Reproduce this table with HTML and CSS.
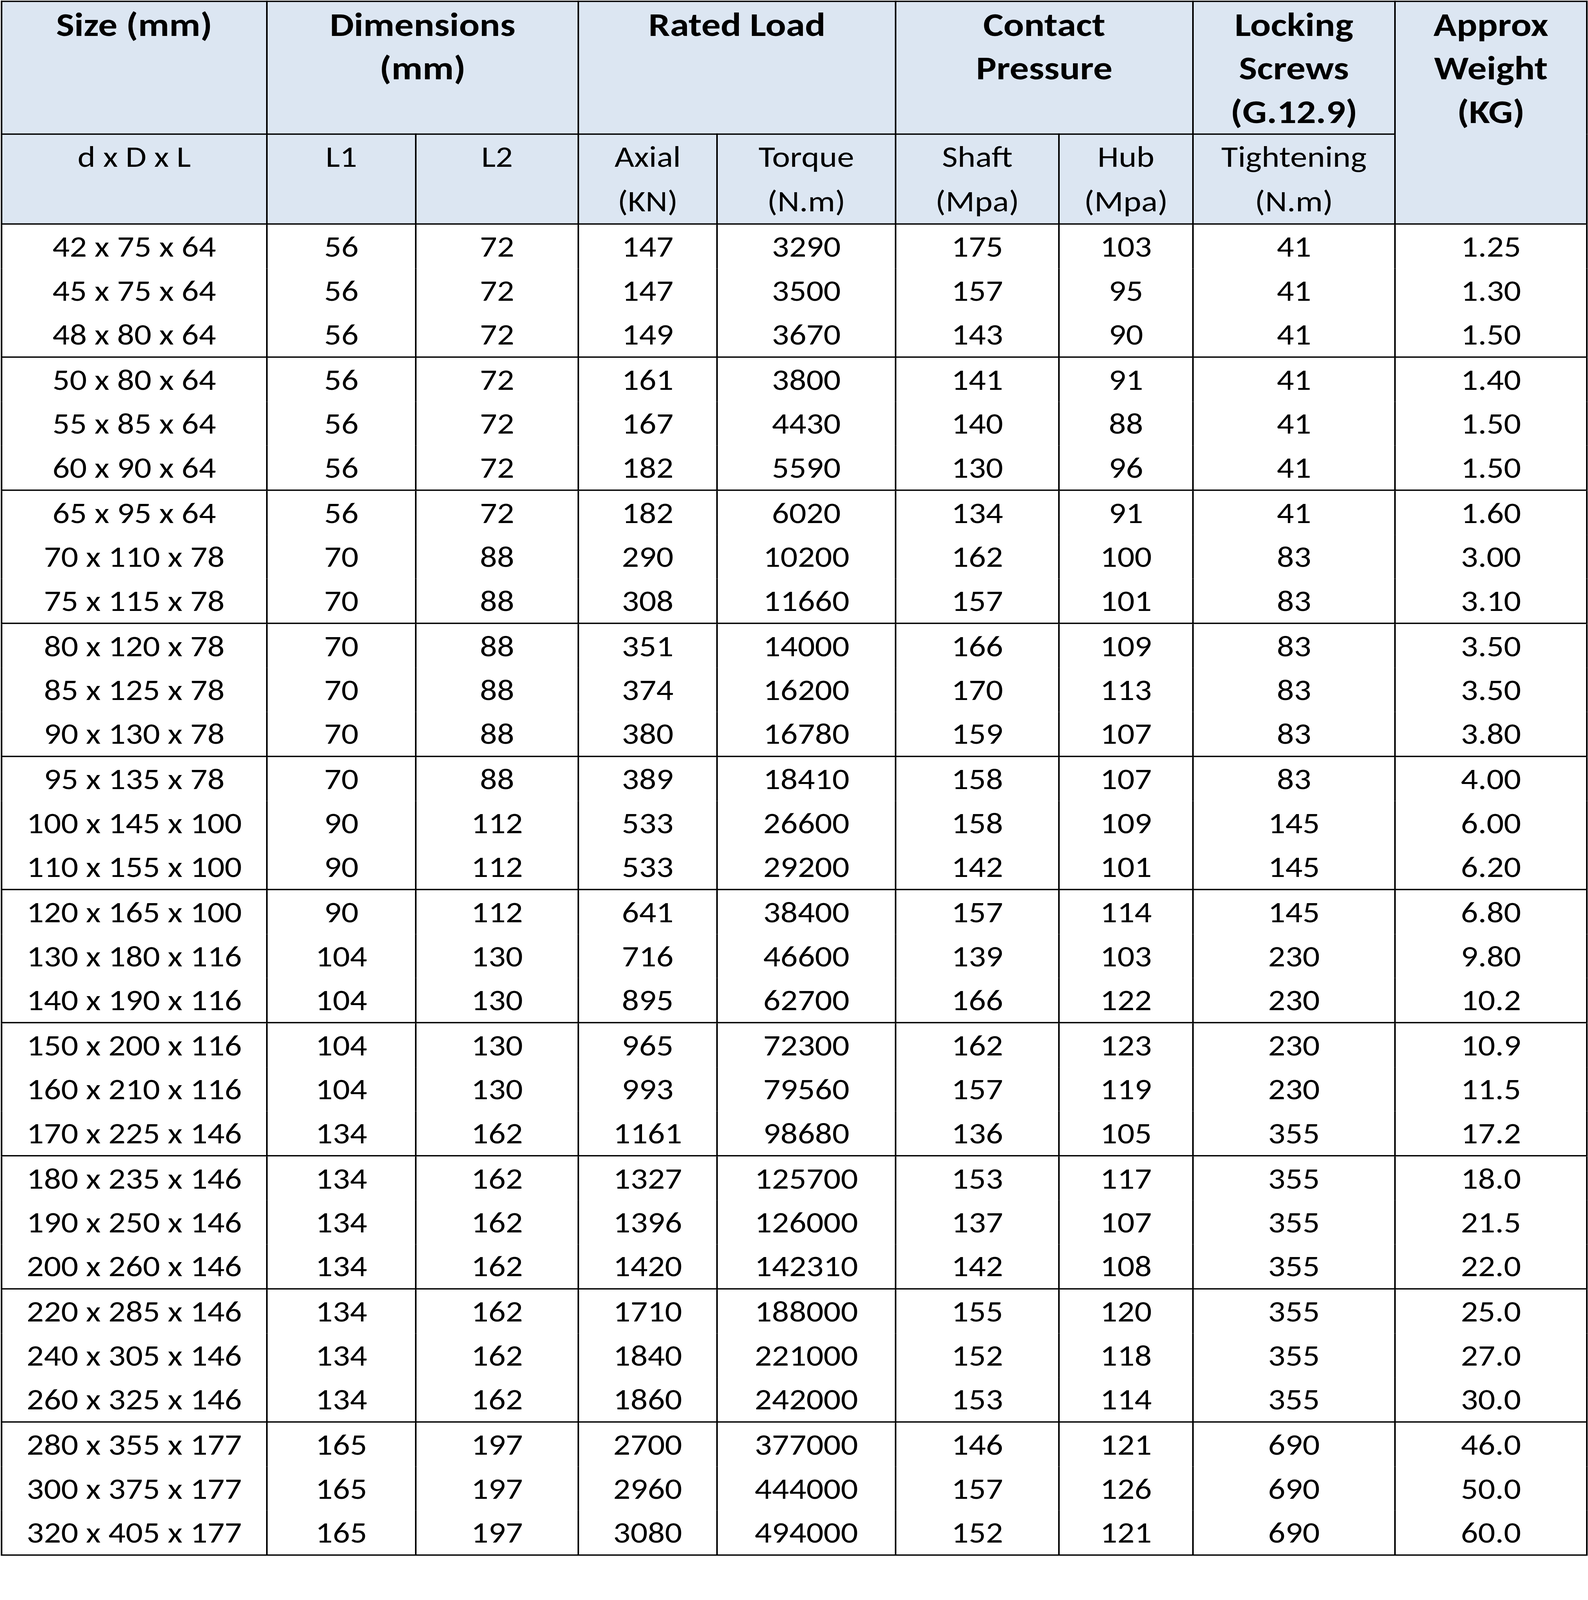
FILE: index.html
```html
<!DOCTYPE html>
<html lang="en">
<head>
<meta charset="utf-8">
<title>Locking Assembly Dimensions</title>
<link rel="stylesheet" href="styles.css">
</head>
<body>
<div class="sheet">
<table class="spec">
  <colgroup>
    <col class="c-size"><col class="c-l1"><col class="c-l2"><col class="c-axial"><col class="c-torque"><col class="c-shaft"><col class="c-hub"><col class="c-tight"><col class="c-weight">
  </colgroup>
  <thead>
    <tr class="head-main">
      <th>Size (mm)</th>
      <th colspan="2">Dimensions<br>(mm)</th>
      <th colspan="2">Rated Load</th>
      <th colspan="2">Contact<br>Pressure</th>
      <th>Locking<br>Screws<br>(G.12.9)</th>
      <th rowspan="2">Approx<br>Weight<br>(KG)</th>
    </tr>
    <tr class="head-sub">
      <th>d x D x L</th>
      <th>L1</th>
      <th>L2</th>
      <th>Axial<br>(KN)</th>
      <th>Torque<br>(N.m)</th>
      <th>Shaft<br>(Mpa)</th>
      <th>Hub<br>(Mpa)</th>
      <th>Tightening<br>(N.m)</th>
    </tr>
  </thead>
  <tbody>
    <tr><td>42 x 75 x 64</td><td>56</td><td>72</td><td>147</td><td>3290</td><td>175</td><td>103</td><td>41</td><td>1.25</td></tr>
    <tr><td>45 x 75 x 64</td><td>56</td><td>72</td><td>147</td><td>3500</td><td>157</td><td>95</td><td>41</td><td>1.30</td></tr>
    <tr><td>48 x 80 x 64</td><td>56</td><td>72</td><td>149</td><td>3670</td><td>143</td><td>90</td><td>41</td><td>1.50</td></tr>
  </tbody>
  <tbody>
    <tr><td>50 x 80 x 64</td><td>56</td><td>72</td><td>161</td><td>3800</td><td>141</td><td>91</td><td>41</td><td>1.40</td></tr>
    <tr><td>55 x 85 x 64</td><td>56</td><td>72</td><td>167</td><td>4430</td><td>140</td><td>88</td><td>41</td><td>1.50</td></tr>
    <tr><td>60 x 90 x 64</td><td>56</td><td>72</td><td>182</td><td>5590</td><td>130</td><td>96</td><td>41</td><td>1.50</td></tr>
  </tbody>
  <tbody>
    <tr><td>65 x 95 x 64</td><td>56</td><td>72</td><td>182</td><td>6020</td><td>134</td><td>91</td><td>41</td><td>1.60</td></tr>
    <tr><td>70 x 110 x 78</td><td>70</td><td>88</td><td>290</td><td>10200</td><td>162</td><td>100</td><td>83</td><td>3.00</td></tr>
    <tr><td>75 x 115 x 78</td><td>70</td><td>88</td><td>308</td><td>11660</td><td>157</td><td>101</td><td>83</td><td>3.10</td></tr>
  </tbody>
  <tbody>
    <tr><td>80 x 120 x 78</td><td>70</td><td>88</td><td>351</td><td>14000</td><td>166</td><td>109</td><td>83</td><td>3.50</td></tr>
    <tr><td>85 x 125 x 78</td><td>70</td><td>88</td><td>374</td><td>16200</td><td>170</td><td>113</td><td>83</td><td>3.50</td></tr>
    <tr><td>90 x 130 x 78</td><td>70</td><td>88</td><td>380</td><td>16780</td><td>159</td><td>107</td><td>83</td><td>3.80</td></tr>
  </tbody>
  <tbody>
    <tr><td>95 x 135 x 78</td><td>70</td><td>88</td><td>389</td><td>18410</td><td>158</td><td>107</td><td>83</td><td>4.00</td></tr>
    <tr><td>100 x 145 x 100</td><td>90</td><td>112</td><td>533</td><td>26600</td><td>158</td><td>109</td><td>145</td><td>6.00</td></tr>
    <tr><td>110 x 155 x 100</td><td>90</td><td>112</td><td>533</td><td>29200</td><td>142</td><td>101</td><td>145</td><td>6.20</td></tr>
  </tbody>
  <tbody>
    <tr><td>120 x 165 x 100</td><td>90</td><td>112</td><td>641</td><td>38400</td><td>157</td><td>114</td><td>145</td><td>6.80</td></tr>
    <tr><td>130 x 180 x 116</td><td>104</td><td>130</td><td>716</td><td>46600</td><td>139</td><td>103</td><td>230</td><td>9.80</td></tr>
    <tr><td>140 x 190 x 116</td><td>104</td><td>130</td><td>895</td><td>62700</td><td>166</td><td>122</td><td>230</td><td>10.2</td></tr>
  </tbody>
  <tbody>
    <tr><td>150 x 200 x 116</td><td>104</td><td>130</td><td>965</td><td>72300</td><td>162</td><td>123</td><td>230</td><td>10.9</td></tr>
    <tr><td>160 x 210 x 116</td><td>104</td><td>130</td><td>993</td><td>79560</td><td>157</td><td>119</td><td>230</td><td>11.5</td></tr>
    <tr><td>170 x 225 x 146</td><td>134</td><td>162</td><td>1161</td><td>98680</td><td>136</td><td>105</td><td>355</td><td>17.2</td></tr>
  </tbody>
  <tbody>
    <tr><td>180 x 235 x 146</td><td>134</td><td>162</td><td>1327</td><td>125700</td><td>153</td><td>117</td><td>355</td><td>18.0</td></tr>
    <tr><td>190 x 250 x 146</td><td>134</td><td>162</td><td>1396</td><td>126000</td><td>137</td><td>107</td><td>355</td><td>21.5</td></tr>
    <tr><td>200 x 260 x 146</td><td>134</td><td>162</td><td>1420</td><td>142310</td><td>142</td><td>108</td><td>355</td><td>22.0</td></tr>
  </tbody>
  <tbody>
    <tr><td>220 x 285 x 146</td><td>134</td><td>162</td><td>1710</td><td>188000</td><td>155</td><td>120</td><td>355</td><td>25.0</td></tr>
    <tr><td>240 x 305 x 146</td><td>134</td><td>162</td><td>1840</td><td>221000</td><td>152</td><td>118</td><td>355</td><td>27.0</td></tr>
    <tr><td>260 x 325 x 146</td><td>134</td><td>162</td><td>1860</td><td>242000</td><td>153</td><td>114</td><td>355</td><td>30.0</td></tr>
  </tbody>
  <tbody>
    <tr><td>280 x 355 x 177</td><td>165</td><td>197</td><td>2700</td><td>377000</td><td>146</td><td>121</td><td>690</td><td>46.0</td></tr>
    <tr><td>300 x 375 x 177</td><td>165</td><td>197</td><td>2960</td><td>444000</td><td>157</td><td>126</td><td>690</td><td>50.0</td></tr>
    <tr><td>320 x 405 x 177</td><td>165</td><td>197</td><td>3080</td><td>494000</td><td>152</td><td>121</td><td>690</td><td>60.0</td></tr>
  </tbody>
</table>
</div>
</body>
</html>
```

FILE: styles.css
```css
html, body {
  margin: 0;
  padding: 0;
  background: #ffffff;
}

body {
  font-family: Carlito, Lato, "Liberation Sans", sans-serif;
  color: #000000;
}

.sheet {
  padding: 2px 0 0 2px;
  transform-origin: 0 0;
}

.spec {
  border-collapse: collapse;
  table-layout: fixed;
  width: 4057px;
  border: 4px solid #000;
}

.c-size { width: 679px; }
.c-l1 { width: 381px; }
.c-l2 { width: 416px; }
.c-axial { width: 355px; }
.c-torque { width: 457px; }
.c-shaft { width: 418px; }
.c-hub { width: 343px; }
.c-tight { width: 517px; }
.c-weight { width: 491px; }

.spec th {
  background: #dce6f2;
  border: 4px solid #000;
  text-align: center;
  vertical-align: top;
  padding: 0;
}

.head-main th {
  font-size: 98px;
  font-weight: 700;
  line-height: 129px;
  height: 387px;
  padding-top: 2px;
}

.head-sub th {
  font-size: 87px;
  font-weight: 400;
  line-height: 131px;
  height: 262px;
}

.spec tbody {
  border-bottom: 4px solid #000;
}

.spec td {
  border-left: 4px solid #000;
  border-right: 4px solid #000;
  border-top: none;
  border-bottom: none;
  font-size: 87px;
  line-height: 130px;
  height: 130px;
  padding: 0;
  text-align: center;
  vertical-align: top;
  white-space: nowrap;
}

/* The full sheet is 4736px tall; when the window is shorter,
   fit the sheet to the window height so no row is cut off. */
@media (max-height: 4700px) {
  html, body {
    height: 100vh;
    overflow: hidden;
  }
  .sheet {
    transform: scaleY(0.864865);
    transform: scaleY(calc(100vh / 4736px));
  }
}
```
